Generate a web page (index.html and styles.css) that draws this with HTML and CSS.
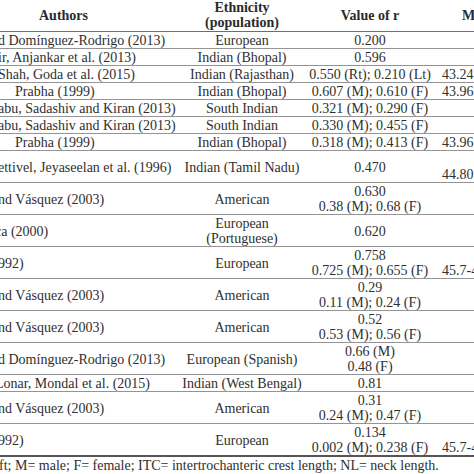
FILE: index.html
```html
<!DOCTYPE html>
<html>
<head>
<meta charset="utf-8">
<link rel="stylesheet" href="styles.css">
</head>
<body>
<div class="page">
<table class="tbl">
  <colgroup>
    <col class="c-auth">
    <col class="c-eth">
    <col class="c-val">
    <col class="c-m">
  </colgroup>
  <thead>
    <tr>
      <th class="h-auth">Authors</th>
      <th>Ethnicity<br>(population)</th>
      <th>Value of r</th>
      <th class="h-m">Mean NL (mm)</th>
    </tr>
  </thead>
  <tbody>
    <tr><td class="auth">d Domínguez-Rodrigo (2013)</td><td>European</td><td>0.200</td><td class="m"></td></tr>
    <tr><td class="auth">ir, Anjankar et al. (2013)</td><td>Indian (Bhopal)</td><td>0.596</td><td class="m"></td></tr>
    <tr><td class="auth">Shah, Goda et al. (2015)</td><td>Indian (Rajasthan)</td><td>0.550 (Rt); 0.210 (Lt)</td><td class="m">43.24 ± 3.10</td></tr>
    <tr><td class="auth gap">Prabha (1999)</td><td>Indian (Bhopal)</td><td>0.607 (M); 0.610 (F)</td><td class="m">43.96 ± 2.80</td></tr>
    <tr><td class="auth">abu, Sadashiv and Kiran (2013)</td><td>South Indian</td><td>0.321 (M); 0.290 (F)</td><td class="m"></td></tr>
    <tr><td class="auth">abu, Sadashiv and Kiran (2013)</td><td>South Indian</td><td>0.330 (M); 0.455 (F)</td><td class="m"></td></tr>
    <tr><td class="auth gap">Prabha (1999)</td><td>Indian (Bhopal)</td><td>0.318 (M); 0.413 (F)</td><td class="m">43.96 ± 2.80</td></tr>
    <tr class="tall"><td class="auth">ettivel, Jeyaseelan et al. (1996)</td><td>Indian (Tamil Nadu)</td><td>0.470</td><td class="m">44.80 ± 3.00</td></tr>
    <tr><td class="auth">nd Vásquez (2003)</td><td>American</td><td>0.630<br>0.38 (M); 0.68 (F)</td><td class="m"></td></tr>
    <tr><td class="auth cut">ca (2000)</td><td>European<br>(Portuguese)</td><td>0.620</td><td class="m"></td></tr>
    <tr><td class="auth">992)</td><td>European</td><td>0.758<br>0.725 (M); 0.655 (F)</td><td class="m">45.7-48.2</td></tr>
    <tr><td class="auth">nd Vásquez (2003)</td><td>American</td><td>0.29<br>0.11 (M); 0.24 (F)</td><td class="m"></td></tr>
    <tr><td class="auth">nd Vásquez (2003)</td><td>American</td><td>0.52<br>0.53 (M); 0.56 (F)</td><td class="m"></td></tr>
    <tr><td class="auth">d Domínguez-Rodrigo (2013)</td><td>European (Spanish)</td><td>0.66 (M)<br>0.48 (F)</td><td class="m"></td></tr>
    <tr><td class="auth cut">Lonar, Mondal et al. (2015)</td><td>Indian (West Bengal)</td><td>0.81</td><td class="m"></td></tr>
    <tr><td class="auth">nd Vásquez (2003)</td><td>American</td><td>0.31<br>0.24 (M); 0.47 (F)</td><td class="m"></td></tr>
    <tr class="last"><td class="auth">992)</td><td>European</td><td>0.134<br>0.002 (M); 0.238 (F)</td><td class="m">45.7-48.2</td></tr>
  </tbody>
</table>
<div class="note">ft; M= male; F= female; ITC= intertrochanteric crest length; NL= neck length.</div>
</div>
</body>
</html>
```
FILE: styles.css
```css
html, body {
  margin: 0;
  padding: 0;
  background: #ffffff;
  overflow: hidden;
}
.page {
  width: 474px;
  height: 474px;
  overflow: hidden;
  font-family: "Liberation Serif", "Times New Roman", serif;
  font-size: 14px;
  color: #2f2f2f;
}
.tbl {
  border-collapse: separate;
  border-spacing: 0;
  table-layout: fixed;
  width: 544px;
  margin-left: -2px;
}
.c-auth { width: 184px; }
.c-eth { width: 120px; }
.c-val { width: 136px; }
.c-m { width: 104px; }
.tbl th {
  font-weight: bold;
  line-height: 15px;
  padding: 0 0 1px 0;
  border-bottom: 1px solid #6e6e6e;
  text-align: center;
  vertical-align: middle;
  white-space: nowrap;
  color: #2a2a2a;
}
.tbl th.h-auth {
  text-align: left;
  padding-left: 41px;
}
.tbl th.h-m {
  text-align: left;
  padding-left: 24px;
}
.tbl td {
  line-height: 15px;
  padding: 1px 0 0 0;
  border-bottom: 1px solid #949494;
  text-align: center;
  vertical-align: middle;
  white-space: nowrap;
}
.tbl td.auth {
  text-align: left;
}
.tbl td.gap {
  padding-left: 17px;
}
.tbl td.cut {
  text-indent: -3px;
}
.tbl td.m {
  text-align: left;
  vertical-align: bottom;
  padding-left: 4px;
}
.tbl tr.tall td {
  height: 30px;
}
.tbl tr.last td {
  border-bottom: 2px solid #555555;
}
.note {
  line-height: 15px;
  padding-top: 1px;
  white-space: nowrap;
  margin-left: -1px;
}
```
